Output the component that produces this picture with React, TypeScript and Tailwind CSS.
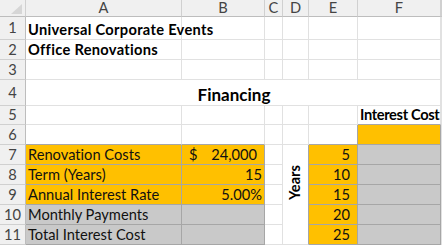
import React from 'react';

const grid = 'border-r border-b border-[#e1e1e1]';
const hdr = 'border-r border-b border-[#d0d0d0] bg-[#f0f0f0] text-[#444] flex items-center justify-center';
const orange = 'bg-[#ffc000] border-r border-b border-[#a6a6a6]';
const gray = 'bg-[#c9c9c9] border-r border-b border-[#a6a6a6]';
const cell = 'flex items-end pb-[1px] leading-none whitespace-nowrap';

const App = () => {
  const letters = ['A', 'B', 'C', 'D', 'E', 'F', ''];

  return (
    <div
      className="w-[442px] h-[245px] overflow-hidden bg-white text-[14.67px] text-[#111] [font-variant-ligatures:none]"
      style={{ fontFamily: 'Lato, "Liberation Sans", sans-serif' }}
    >
      <div className="grid grid-cols-[26px_156px_83px_18px_26px_49px_83px_1fr] grid-rows-[17px_23px_20px_20px_26px_19px_20px_20px_20px_20px_20px_20px]">
        {/* header row */}
        <div className={`${hdr} relative border-b-[#bdbdbd]`}>
          <div className="absolute right-[3px] bottom-[2px] w-0 h-0 border-l-[11px] border-l-transparent border-b-[10px] border-b-[#d6d6d6]" />
        </div>
        {letters.map((l, i) => (
          <div key={i} className={`${hdr} border-b-[#bdbdbd]`}>{l}</div>
        ))}

        {/* row 1 */}
        <div className={`${hdr} border-r-[#bdbdbd]`}>1</div>
        <div className={`${grid} ${cell} pl-[2px] font-bold text-black tracking-[0.3px]`}>
          <span className="relative z-10">Universal Corporate Events</span>
        </div>
        <div className={grid} />
        <div className={grid} />
        <div className={grid} />
        <div className={grid} />
        <div className={grid} />
        <div className={grid} />

        {/* row 2 */}
        <div className={`${hdr} border-r-[#bdbdbd]`}>2</div>
        <div className={`${grid} ${cell} pl-[2px] font-bold text-black tracking-[0.3px]`}>Office Renovations</div>
        <div className={grid} />
        <div className={grid} />
        <div className={grid} />
        <div className={grid} />
        <div className={grid} />
        <div className={grid} />

        {/* row 3 */}
        <div className={`${hdr} border-r-[#bdbdbd]`}>3</div>
        <div className={grid} />
        <div className={grid} />
        <div className={grid} />
        <div className={grid} />
        <div className={grid} />
        <div className={grid} />
        <div className={grid} />

        {/* row 4 */}
        <div className={`${hdr} border-r-[#bdbdbd]`}>4</div>
        <div className={`col-span-6 ${grid} ${cell} justify-center pl-[2px] pb-[2px] font-bold text-[17px] text-black`}>
          Financing
        </div>
        <div className={grid} />

        {/* row 5 */}
        <div className={`${hdr} border-r-[#bdbdbd]`}>5</div>
        <div className={grid} />
        <div className={grid} />
        <div className={grid} />
        <div className={grid} />
        <div className={grid} />
        <div className={`border-r border-[#e1e1e1] border-b border-b-[#a6a6a6] ${cell} pl-[2px] font-bold text-black tracking-[-0.35px]`}>
          Interest Cost
        </div>
        <div className={grid} />

        {/* row 6 */}
        <div className={`${hdr} border-r-[#bdbdbd]`}>6</div>
        <div className={`${grid} border-b-[#a6a6a6]`} />
        <div className={`${grid} border-b-[#a6a6a6]`} />
        <div className={grid} />
        <div className={grid} />
        <div className={`${grid} border-b-[#a6a6a6] border-r-[#a6a6a6]`} />
        <div className={orange} />
        <div className={grid} />

        {/* row 7 */}
        <div className={`${hdr} border-r-[#bdbdbd]`}>7</div>
        <div className={`${orange} ${cell} pl-[2px]`}>Renovation Costs</div>
        <div className={`${orange} ${cell} justify-between pl-[7px] pr-[7px]`}>
          <span>$</span>
          <span>24,000</span>
        </div>
        <div className={grid} />
        <div className="row-span-5 border-r border-b border-[#e1e1e1] border-r-[#a6a6a6] flex flex-col items-center pt-[20px]">
          <span className="font-bold text-black leading-none [writing-mode:vertical-rl] rotate-180">Years</span>
        </div>
        <div className={`${orange} ${cell} justify-end pr-[7px]`}>5</div>
        <div className={gray} />
        <div className={grid} />

        {/* row 8 */}
        <div className={`${hdr} border-r-[#bdbdbd]`}>8</div>
        <div className={`${orange} ${cell} pl-[2px]`}>Term (Years)</div>
        <div className={`${orange} ${cell} justify-end pr-[2px]`}>15</div>
        <div className={grid} />
        <div className={`${orange} ${cell} justify-end pr-[7px]`}>10</div>
        <div className={gray} />
        <div className={grid} />

        {/* row 9 */}
        <div className={`${hdr} border-r-[#bdbdbd]`}>9</div>
        <div className={`${orange} ${cell} pl-[2px]`}>Annual Interest Rate</div>
        <div className={`${orange} ${cell} justify-end pr-[2px]`}>5.00%</div>
        <div className={grid} />
        <div className={`${orange} ${cell} justify-end pr-[7px]`}>15</div>
        <div className={gray} />
        <div className={grid} />

        {/* row 10 */}
        <div className={`${hdr} border-r-[#bdbdbd]`}>10</div>
        <div className={`${gray} ${cell} pl-[2px]`}>Monthly Payments</div>
        <div className={gray} />
        <div className={grid} />
        <div className={`${orange} ${cell} justify-end pr-[7px]`}>20</div>
        <div className={gray} />
        <div className={grid} />

        {/* row 11 */}
        <div className={`${hdr} border-r-[#bdbdbd]`}>11</div>
        <div className={`${gray} ${cell} pl-[2px]`}>Total Interest Cost</div>
        <div className={gray} />
        <div className={grid} />
        <div className={`${orange} ${cell} justify-end pr-[7px]`}>25</div>
        <div className={gray} />
        <div className={grid} />
      </div>
    </div>
  );
};

export default App;
